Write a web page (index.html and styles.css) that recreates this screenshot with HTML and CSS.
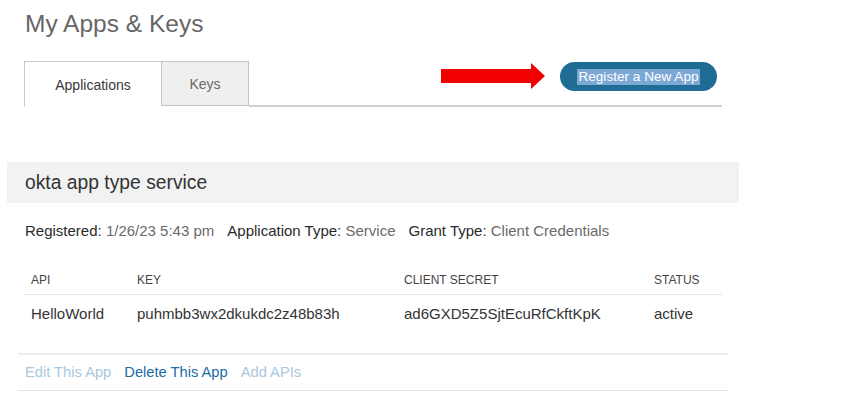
FILE: index.html
```html
<!DOCTYPE html>
<html lang="en">
<head>
<meta charset="utf-8">
<title>My Apps &amp; Keys</title>
<link rel="stylesheet" href="styles.css">
</head>
<body>
<div class="page">
  <h1 class="title">My Apps &amp; Keys</h1>
  <div class="tabs-row">
    <div class="tab tab-active">Applications</div>
    <div class="tab tab-inactive">Keys</div>
    <div class="tab-fill">
      <svg class="arrow" width="104" height="26" viewBox="0 0 104 26" aria-hidden="true">
        <polygon points="0,6 90,6 90,0 104,13 90,26 90,20 0,20" fill="#f20000"/>
      </svg>
      <button class="btn-register" type="button"><span class="sel">Register a New App</span></button>
    </div>
  </div>
</div>

<div class="app">
  <div class="app-head">okta app type service</div>
  <div class="app-body">
    <div class="meta">
      <span class="meta-item"><span class="meta-label">Registered:</span> <span class="meta-value">1/26/23 5:43 pm</span></span>
      <span class="meta-item"><span class="meta-label">Application Type:</span> <span class="meta-value">Service</span></span>
      <span class="meta-item"><span class="meta-label">Grant Type:</span> <span class="meta-value">Client Credentials</span></span>
    </div>
    <div class="keys-table">
      <div class="row row-head">
        <div class="cell">API</div>
        <div class="cell">KEY</div>
        <div class="cell">CLIENT SECRET</div>
        <div class="cell">STATUS</div>
      </div>
      <div class="row row-data">
        <div class="cell">HelloWorld</div>
        <div class="cell">puhmbb3wx2dkukdc2z48b83h</div>
        <div class="cell">ad6GXD5Z5SjtEcuRfCkftKpK</div>
        <div class="cell">active</div>
      </div>
    </div>
    <div class="actions">
      <a class="action action-muted">Edit This App</a>
      <a class="action action-primary">Delete This App</a>
      <a class="action action-muted">Add APIs</a>
    </div>
  </div>
</div>
</body>
</html>
```

FILE: styles.css
```css
* { box-sizing: border-box; }

body {
  margin: 0;
  font-family: "Liberation Sans", Arial, sans-serif;
  color: #333;
  background: #fff;
}

.page {
  padding: 0 131px 0 24px;
}

.title {
  margin: 10px 0 0 1px;
  font-size: 24.5px;
  line-height: 28px;
  font-weight: normal;
  color: #666;
}

.tabs-row {
  display: flex;
  margin-top: 23px;
  height: 46px;
}

.tab {
  display: flex;
  align-items: center;
  justify-content: center;
  font-size: 14px;
  height: 45px;
}

.tab-active {
  width: 137px;
  border-top: 1px solid #c9c9c9;
  border-left: 1px solid #c9c9c9;
  background: #fff;
  color: #3a3a3a;
  height: 46px;
}

.tab-inactive {
  width: 88px;
  border: 1px solid #c4c4c4;
  background: #efefef;
  color: #6a6a6a;
}

.tab-fill {
  flex: 1;
  display: flex;
  justify-content: flex-end;
  align-items: flex-start;
  padding: 1px 5px 0 0;
  border-bottom: 2px solid #cfcfcf;
}

.arrow {
  display: block;
  margin-top: 1px;
}

.btn-register {
  margin-left: 15px;
  width: 157px;
  height: 29px;
  border: none;
  border-radius: 15px;
  background: #1f6c95;
  font-family: "Liberation Sans", Arial, sans-serif;
  font-size: 13.6px;
  color: #fff;
  padding: 0;
  display: flex;
  align-items: center;
  justify-content: center;
}

.sel {
  background: #7ca8d6;
  color: #fff;
  line-height: 16px;
  padding: 0 1px;
}

.app {
  margin: 55px 0 0 7px;
  width: 732px;
}

.app-head {
  height: 41px;
  background: #f2f2f2;
  padding-left: 18px;
  display: flex;
  align-items: center;
  font-size: 19.3px;
  color: #333;
}

.app-body {
  padding: 0 11px;
}

.meta {
  margin-top: 18px;
  padding-left: 7px;
  font-size: 15px;
  line-height: 20px;
  display: flex;
  gap: 13px;
}

.meta-label { color: #2a2a2a; }
.meta-value { color: #6a6a6a; }

.keys-table {
  margin: 32px 6px 0 7px;
}

.row {
  display: grid;
  grid-template-columns: 106px 267px 250px 74px;
}

.cell {
  padding-left: 6px;
}

.row-head {
  font-size: 12px;
  line-height: 14px;
  color: #444;
  padding-bottom: 7px;
  border-bottom: 1px solid #e6e6e6;
}

.row-data {
  font-size: 15px;
  line-height: 20px;
  color: #333;
  padding: 9px 0 29px;
}

.actions {
  border-top: 2px solid #eeeeee;
  border-bottom: 1px solid #e4e4e4;
  padding: 7px 0 8px 7px;
  display: flex;
  gap: 13px;
  font-size: 14.7px;
  line-height: 20px;
}

.action-muted { color: #a8c7e0; }
.action-primary { color: #1b6ca4; }
```
